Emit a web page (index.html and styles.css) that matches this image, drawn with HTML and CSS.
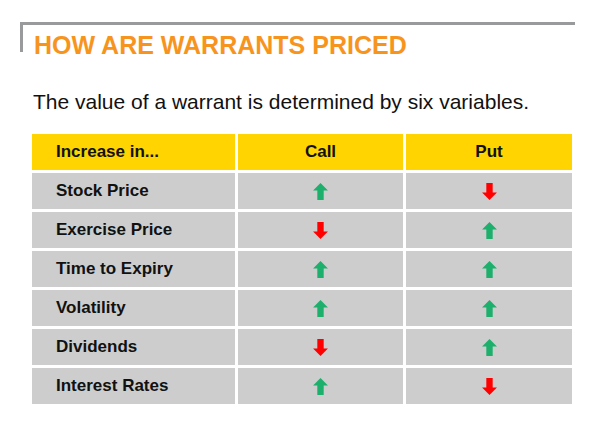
FILE: index.html
```html
<!DOCTYPE html>
<html>
<head>
<meta charset="utf-8">
<link rel="stylesheet" href="styles.css">
</head>
<body>
<div class="page">
  <div class="frame">
    <h1 class="title">HOW ARE WARRANTS PRICED</h1>
  </div>
  <p class="lead">The value of a warrant is determined by six variables.</p>
  <div class="table">
    <div class="cell head label">Increase in...</div>
    <div class="cell head center">Call</div>
    <div class="cell head center">Put</div>

    <div class="cell label">Stock Price</div>
    <div class="cell center"><svg class="arrow up" viewBox="0 0 14 16"><path d="M7 0 L14 7 L10 7 L10 16 L4 16 L4 7 L0 7 Z"/></svg></div>
    <div class="cell center"><svg class="arrow down" viewBox="0 0 14 16"><path d="M7 16 L14 9 L10 9 L10 0 L4 0 L4 9 L0 9 Z"/></svg></div>

    <div class="cell label">Exercise Price</div>
    <div class="cell center"><svg class="arrow down" viewBox="0 0 14 16"><path d="M7 16 L14 9 L10 9 L10 0 L4 0 L4 9 L0 9 Z"/></svg></div>
    <div class="cell center"><svg class="arrow up" viewBox="0 0 14 16"><path d="M7 0 L14 7 L10 7 L10 16 L4 16 L4 7 L0 7 Z"/></svg></div>

    <div class="cell label">Time to Expiry</div>
    <div class="cell center"><svg class="arrow up" viewBox="0 0 14 16"><path d="M7 0 L14 7 L10 7 L10 16 L4 16 L4 7 L0 7 Z"/></svg></div>
    <div class="cell center"><svg class="arrow up" viewBox="0 0 14 16"><path d="M7 0 L14 7 L10 7 L10 16 L4 16 L4 7 L0 7 Z"/></svg></div>

    <div class="cell label">Volatility</div>
    <div class="cell center"><svg class="arrow up" viewBox="0 0 14 16"><path d="M7 0 L14 7 L10 7 L10 16 L4 16 L4 7 L0 7 Z"/></svg></div>
    <div class="cell center"><svg class="arrow up" viewBox="0 0 14 16"><path d="M7 0 L14 7 L10 7 L10 16 L4 16 L4 7 L0 7 Z"/></svg></div>

    <div class="cell label">Dividends</div>
    <div class="cell center"><svg class="arrow down" viewBox="0 0 14 16"><path d="M7 16 L14 9 L10 9 L10 0 L4 0 L4 9 L0 9 Z"/></svg></div>
    <div class="cell center"><svg class="arrow up" viewBox="0 0 14 16"><path d="M7 0 L14 7 L10 7 L10 16 L4 16 L4 7 L0 7 Z"/></svg></div>

    <div class="cell label">Interest Rates</div>
    <div class="cell center"><svg class="arrow up" viewBox="0 0 14 16"><path d="M7 0 L14 7 L10 7 L10 16 L4 16 L4 7 L0 7 Z"/></svg></div>
    <div class="cell center"><svg class="arrow down" viewBox="0 0 14 16"><path d="M7 16 L14 9 L10 9 L10 0 L4 0 L4 9 L0 9 Z"/></svg></div>
  </div>
</div>
</body>
</html>
```

FILE: styles.css
```css
* { box-sizing: border-box; }
html, body { margin: 0; padding: 0; background: #fff; }
body {
  font-family: "Liberation Sans", Arial, Helvetica, sans-serif;
  color: #111;
  width: 600px;
  height: 425px;
  overflow: hidden;
}
.page {
  padding: 22px 0 0 20px;
}
.frame {
  width: 555px;
  height: 30px;
  border-top: 3px solid #999a9c;
  border-left: 3px solid #999a9c;
  position: relative;
}
.title {
  position: absolute;
  left: 11px;
  top: 5px;
  margin: 0;
  font-size: 25px;
  line-height: 30px;
  font-weight: bold;
  color: #f7941d;
  letter-spacing: 0;
  white-space: nowrap;
}
.lead {
  margin: 37px 0 0 13px;
  font-size: 21px;
  line-height: 25px;
  color: #111;
}
.table {
  margin: 20px 0 0 12px;
  display: grid;
  grid-template-columns: 203px 165px 166px;
  grid-auto-rows: 36px;
  gap: 3px;
}
.cell {
  background: #cdcdcd;
  display: flex;
  align-items: center;
  font-size: 17px;
  font-weight: bold;
}
.cell.head { background: #ffd400; }
.label { padding-left: 24px; }
.center { justify-content: center; }
.arrow { width: 15px; height: 17px; display: block; }
.arrow.up path { fill: #1daf6c; }
.arrow.down path { fill: #ff0000; }
```
